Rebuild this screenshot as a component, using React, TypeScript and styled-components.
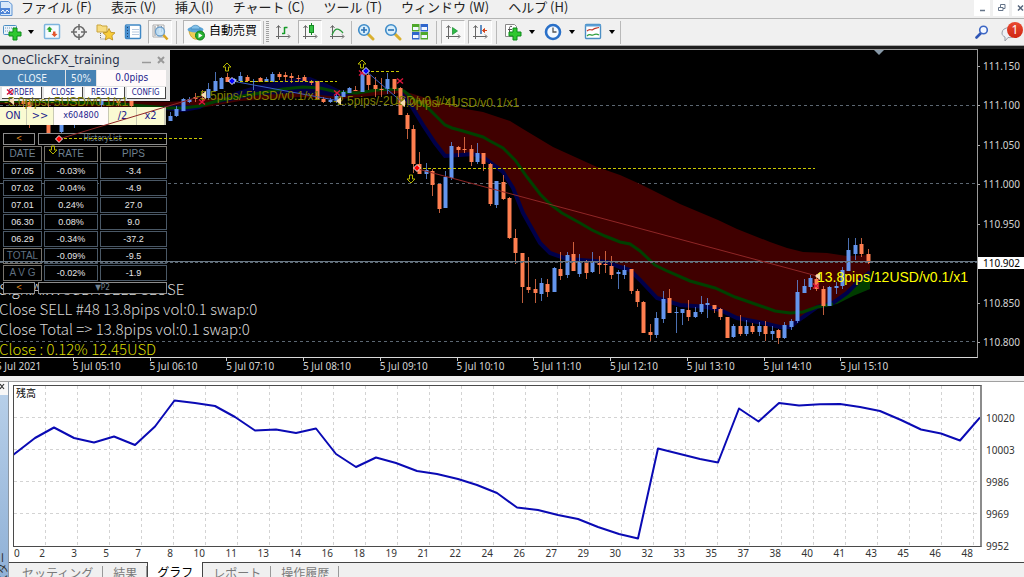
import React from "react";
import styled, { createGlobalStyle, css } from "styled-components";

const GlobalStyle = createGlobalStyle`
  * { box-sizing: border-box; }
  body { margin: 0; background: #f0f0f0; }
  button { font: inherit; color: inherit; margin: 0; padding: 0; border: 0; background: none; }
`;

const uiFont = `"Noto Sans CJK JP", "Noto Sans", sans-serif`;
const axisFont = `"Noto Sans", "Open Sans", sans-serif`;
const panelFont = `"DejaVu Sans Condensed", "DejaVu Sans", sans-serif`;
const gothicFont = `"Noto Sans CJK JP", "Liberation Sans", sans-serif`;

/* ---------- shell ---------- */

const Terminal = styled.div`
  display: flex;
  flex-direction: column;
  min-height: 100vh;
  overflow: hidden;
  background: #f0f0f0;
  color: #222;
  font-family: ${uiFont};
`;

const MenuBar = styled.nav`
  display: flex;
  align-items: flex-start;
  gap: 19px;
  height: 19px;
  border-bottom: 1px solid #b4b4b4;
`;

const DocIcon = styled.svg`
  flex: none;
  width: 13px;
  height: 17px;
  margin-right: -11px;
`;

const MenuItem = styled.button`
  font-size: 13px;
  line-height: 14px;
  white-space: nowrap;
`;

const WindowButtons = styled.div`
  display: flex;
  gap: 3px;
  margin-left: auto;
  margin-right: -4px;
`;

const WindowButton = styled.button`
  width: 16px;
  height: 16px;
  background: #fff;
  svg { display: block; }
`;

/* ---------- toolbar ---------- */

const Toolbar = styled.div`
  display: flex;
  align-items: center;
  height: 27px;
  border-bottom: 1px solid #a9a9a9;
`;

const ToolGroup = styled.div`
  display: flex;
  gap: 3px;
`;

const ToolButton = styled.button<{ $pressed?: boolean }>`
  display: flex;
  align-items: center;
  justify-content: center;
  width: 24px;
  height: 24px;
  ${(p) =>
    p.$pressed &&
    css`
      background: #f7f7f7;
      border: 1px solid #fff;
      border-top-color: #b4b4b4;
      border-left-color: #b4b4b4;
    `}
`;

const DropButton = styled.button`
  width: 13px;
  height: 24px;
  margin-left: -3px;
  display: flex;
  align-items: center;
  justify-content: center;
  &::after {
    content: "";
    border: 3px solid transparent;
    border-top: 4px solid #000;
    border-bottom: 0;
  }
`;

const AutoTrade = styled.button`
  display: flex;
  align-items: center;
  gap: 4px;
  height: 24px;
  margin-left: 2px;
  padding: 0 3px;
  font-size: 12px;
  line-height: 20px;
  color: #000;
  background: #f7f7f7;
  border: 1px solid #fff;
  border-top-color: #b4b4b4;
  border-left-color: #b4b4b4;
  white-space: nowrap;
  span { padding-bottom: 4px; }
`;

const Divider = styled.i<{ $tight?: boolean }>`
  width: 1px;
  height: 23px;
  margin: 0 ${(p) => (p.$tight ? 2 : 4)}px;
  background: #b9b9b9;
  & + & { margin: 0; }
`;

const Grip = styled.i`
  width: 3px;
  height: 22px;
  margin-right: 2px;
  background: repeating-linear-gradient(#a0a0a0 0 1px, #f0f0f0 1px 2px);
`;

const ToolbarEnd = styled.div`
  display: flex;
  align-items: center;
  gap: 12px;
  margin-left: auto;
  padding-right: 1px;
`;

const AlertButton = styled.button`
  position: relative;
  width: 22px;
  height: 24px;
`;

const Badge = styled.span`
  position: absolute;
  top: 2px;
  right: 0;
  width: 16px;
  height: 16px;
  border-radius: 8px;
  background: linear-gradient(#ea4a32, #cf2410);
  color: #fff;
  font: 12px/16px ${axisFont};
  text-align: center;
`;

/* ---------- price chart ---------- */

const ChartWindow = styled.section`
  display: grid;
  grid-template-columns: 1fr 46px;
  background: #000;
  border-top: 3px solid #1e1e1e;
`;

const Plot = styled.div`
  position: relative;
  height: 309px;
  border: solid #9a9a9a;
  border-width: 1px 1px 1px 0;
  border-bottom-color: #d8d8d8;
  overflow: hidden;
`;

const Drawing = styled.svg`
  display: block;
  width: 100%;
  height: 100%;
`;

const Overlay = styled(Drawing)`
  position: absolute;
  inset: 0;
  pointer-events: none;
`;

const PriceAxis = styled.div`
  display: flex;
  flex-direction: column;
  justify-content: space-between;
  height: 309px;
  padding: 11px 0 10px;
  color: #d4d4d4;
  font: 10px/12px ${axisFont};
`;

const Price = styled.span<{ $now?: boolean }>`
  padding-left: 5px;
  ${(p) =>
    p.$now
      ? css`
          background: #fff;
          color: #000;
        `
      : css`
          background: linear-gradient(#aaa, #aaa) 0 6px / 2px 1px no-repeat;
        `}
`;

const TimeAxis = styled.div`
  grid-column: 1 / -1;
  display: grid;
  grid-template-columns: repeat(12, 1fr);
  height: 18px;
  margin-left: -4px;
  padding-right: 107px;
  color: #d4d4d4;
  font: 10px/16px ${axisFont};
  white-space: nowrap;
  span { background: linear-gradient(#ccc, #ccc) 0 0 / 1px 3px no-repeat; }
`;

/* ---------- one click panel ---------- */

const Side = styled.div`
  position: absolute;
  top: 0;
  left: 0;
  width: 170px;
`;

const OneClick = styled.div`
  height: 51px;
  background: #e3e3e3;
  padding-right: 4px;
`;

const PanelTitle = styled.div`
  display: flex;
  justify-content: space-between;
  align-items: center;
  height: 20px;
  padding-left: 2px;
  color: #27314a;
  font: 13px/20px ${panelFont};
`;

const PanelControls = styled.div`
  display: flex;
  gap: 6px;
`;

const PanelRow = styled.div`
  display: flex;
  height: 16px;
  gap: 1px;
`;

const Blue = styled.button<{ $grow: number }>`
  flex: ${(p) => p.$grow} 0 0;
  background: #4682b4;
  color: #e9f1f8;
  font: 10px/15px ${panelFont};
`;

const Field = styled.output<{ $grow: number }>`
  flex: ${(p) => p.$grow} 0 0;
  background: #fffafa;
  color: #1c1c8c;
  text-align: center;
  font: 10px/15px ${panelFont};
`;

const SmallRow = styled.div`
  display: grid;
  grid-template-columns: repeat(4, 1fr);
  gap: 2px;
  padding: 1px 0 0 2px;
`;

const Small = styled.button`
  height: 12px;
  background: #fff;
  border: solid #444;
  border-width: 0 1px 1px 0;
  color: #1c1c8c;
  font: 8px/10px ${panelFont};
`;

const LotRow = styled.div`
  display: grid;
  grid-template-columns: 26px 26px 54px 27px 27px;
  gap: 1px;
  width: 166px;
  height: 18px;
  margin: 6px 0 8px;
  background: #c9c9b4;
`;

const Lot = styled.button`
  background: #fafad2;
  color: #1c1c8c;
  font: 11px/18px ${panelFont};
`;

const LotField = styled.output`
  background: #fffafa;
  color: #1c1c8c;
  text-align: center;
  font: 9px/17px ${panelFont};
`;

const ListBar = styled.div`
  display: flex;
  gap: 3px;
  height: 12px;
  padding: 0 3px;
`;

const ListButton = styled.button<{ $wide?: boolean }>`
  flex: ${(p) => (p.$wide ? "1" : "0 0 32px")};
  border: 1px solid #8c8c8c;
  background: #000;
  color: ${(p) => (p.$wide ? "#708090" : "#e08a1e")};
  font: 8px/10px ${panelFont};
`;

const History = styled.table`
  border-spacing: 2px 1px;
  margin-left: 1px;
  width: 168px;
  table-layout: fixed;
  color: #e6e6e6;
  font: 9px/14px "Liberation Sans Narrow", "Liberation Sans", sans-serif;
  text-align: center;
  th, td {
    height: 16px;
    padding: 0;
    border: 1px solid #4a5866;
    background: #000;
    font-weight: 400;
  }
  th {
    color: #708090;
    font: 10px/12px "Liberation Sans", sans-serif;
    border-color: #77746e;
  }
  tbody th { color: #e6e6e6; font: inherit; border-color: #4a5866; }
  tfoot th { color: #5f6f80; }
`;

const Log = styled.div`
  position: absolute;
  left: -1px;
  top: 229px;
  color: #d8d8d8;
  font: 300 15px/20px ${gothicFont};
  white-space: nowrap;
  p { margin: 0; }
  p:last-child { color: #d8d800; }
`;

/* ---------- tester ---------- */

const Splitter = styled.div`
  height: 5px;
  background: #f0f0f0;
`;

const Tester = styled.section`
  display: grid;
  grid-template-columns: 9px 1fr;
  flex: 1;
  border-top: 1px solid #a0a0a0;
`;

const TesterEdge = styled.div`
  position: relative;
  overflow: hidden;
  background: linear-gradient(#b9d1ea, #8fb0d6);
  border-right: 1px solid #8b96a2;
`;

const CloseTester = styled.button`
  display: block;
  width: 8px;
  height: 13px;
  background: #f7f7f7;
  svg { display: block; }
`;

const TesterName = styled.span`
  position: absolute;
  top: 166px;
  left: -5px;
  writing-mode: vertical-rl;
  text-orientation: sideways;
  transform: rotate(180deg);
  color: #333;
  font-size: 11px;
  line-height: 15px;
  height: 48px;
`;

const TesterBody = styled.div`
  display: flex;
  flex-direction: column;
  min-width: 0;
`;

const Balance = styled.div`
  display: grid;
  grid-template-columns: 1fr 42px;
  grid-template-rows: 162px 15px;
  padding: 3px 0 0 4px;
  background: #fff;
`;

const BalancePlot = styled.div`
  height: 162px;
  border: solid #4a4a4a;
  border-width: 1px 2px 1px 1px;
  border-right-color: #8c8c8c;
`;

const BalanceAxis = styled.div`
  display: flex;
  flex-direction: column;
  justify-content: space-between;
  height: 142px;
  margin-top: 26px;
  padding-left: 4px;
  color: #333;
  font: 10px/14px ${axisFont};
`;

const TradeAxis = styled.div`
  grid-column: 1 / -1;
  display: flex;
  color: #333;
  font: 10px/13px ${axisFont};
  span { width: 32px; text-align: right; }
  span:first-child { width: 0; padding-left: 1px; margin-right: -1px; }
`;

const Tabs = styled.div`
  display: flex;
  flex: 1;
  min-height: 15px;
  height: 15px;
  overflow: hidden;
  background: #f0f0f0;
`;

const Tab = styled.button<{ $active?: boolean }>`
  height: 20px;
  padding: 0 10px;
  border-top: 1px solid #444;
  color: #7a7a7a;
  font-size: 12px;
  line-height: 18px;
  white-space: nowrap;
  ${(p) =>
    p.$active
      ? css`
          padding: 0 9px;
          background: #fff;
          color: #000;
          border: 1px solid #444;
          border-width: 0 1px;
        `
      : css`
          background: linear-gradient(#999, #999) 100% 3px / 1px 14px no-repeat;
        `}
`;

const TabLead = styled.i<{ $fill?: boolean }>`
  flex: ${(p) => (p.$fill ? "1" : "0 0 3px")};
  border-top: 1px solid #444;
`;

/* ---------- data ---------- */

const menus = ["ファイル (F)", "表示 (V)", "挿入(I)", "チャート (C)", "ツール (T)", "ウィンドウ (W)", "ヘルプ (H)"];

const prices = ["111.150", "111.100", "111.050", "111.000", "110.950", "110.902", "110.850", "110.800"];

const times = [
  "5 Jul 2021", "5 Jul 05:10", "5 Jul 06:10", "5 Jul 07:10", "5 Jul 08:10", "5 Jul 09:10",
  "5 Jul 10:10", "5 Jul 11:10", "5 Jul 12:10", "5 Jul 13:10", "5 Jul 14:10", "5 Jul 15:10",
];

const historyRows = [
  ["07.05", "-0.03%", "-3.4"],
  ["07.02", "-0.04%", "-4.9"],
  ["07.01", "0.24%", "27.0"],
  ["06.30", "0.08%", "9.0"],
  ["06.29", "-0.34%", "-37.2"],
];

const historyTotals = [
  ["TOTAL", "-0.09%", "-9.5"],
  ["A V G", "-0.02%", "-1.9"],
];

const tradeNumbers = [
  0, 2, 3, 5, 7, 8, 10, 11, 13, 14, 16, 18, 19, 21, 22, 24, 26, 27, 29, 30, 32, 33, 35, 37, 38, 40, 41, 43, 45, 46, 48,
];

const balanceLine =
  "13,455 35,438 54,427.5 74,438 94,442.5 114,436.5 135,445 155,426.5 174.5,400.5 195,403 215,406 235,417 255,430.5 276,429.5 296,433 316,428.5 336,454 356,467 376,457.5 396,463 417,471 437,474 458,479 477,485 497,493 517,507.5 538,510 558,515 578,519 598,527 619,534 638,538.5 658,448.5 680,454 700,459 718,462.5 739,408.5 758.5,421.5 779,403 799,405.5 820,404.3 840,404 860,407 880,411 901,420 921,429.5 941,433.5 960,440.5 980,417.5";

type Candle = [x: number, up: 0 | 1, high: number, top: number, bottom: number, low: number];

const candles: Candle[] = [
  [23, 0, 96, 98, 104, 112], [29, 0, 100, 102, 108, 128], [48, 0, 100, 110, 133, 133], [61, 1, 110, 116, 132, 133],
  [74, 1, 120, 122, 124, 128], [101, 1, 98, 99, 105, 107], [131, 0, 98, 101, 106, 108], [118, 0, 98, 100, 103, 106],
  [170, 1, 112, 116, 121, 121], [176, 1, 106, 109, 116, 117], [183, 1, 98, 99, 111, 111], [189, 1, 97, 99, 102, 103],
  [195, 0, 93, 97, 99, 102], [202, 0, 90, 98, 99, 103], [208, 1, 83, 89, 98, 100], [215, 1, 72, 81, 91, 91],
  [221, 1, 77, 78, 89, 89], [227, 0, 73, 77, 82, 82], [234, 1, 78, 79, 81, 84], [240, 1, 72, 76, 81, 81],
  [247, 0, 75, 77, 81, 81], [253, 1, 79, 81, 82, 90], [260, 0, 77, 78, 82, 82], [266, 1, 77, 79, 82, 82],
  [272, 1, 72, 74, 82, 82], [279, 0, 72, 74, 77, 80], [285, 0, 72, 75, 77, 81], [291, 0, 73, 76, 78, 83],
  [298, 0, 75, 78, 79, 82], [304, 0, 75, 77, 81, 81], [311, 0, 80, 81, 83, 85], [317, 0, 81, 81, 99, 99],
  [323, 0, 97, 99, 102, 103], [330, 1, 98, 100, 102, 103], [336, 1, 94, 96, 101, 103], [343, 1, 90, 92, 97, 97],
  [349, 1, 87, 88, 93, 93], [355, 0, 86, 90, 91, 91], [362, 1, 70, 72, 92, 92], [368, 0, 73, 75, 85, 90],
  [375, 0, 77, 85, 89, 97], [381, 0, 78, 89, 90, 97], [387, 1, 73, 79, 89, 94], [394, 0, 79, 79, 89, 94],
  [400, 0, 87, 88, 115, 115], [407, 0, 113, 115, 129, 139], [413, 0, 125, 129, 164, 173], [419, 0, 152, 164, 174, 174],
  [426, 1, 163, 170, 174, 179], [432, 0, 169, 171, 185, 196], [439, 0, 184, 184, 209, 213], [445, 1, 171, 177, 208, 208],
  [451, 1, 142, 146, 178, 180], [458, 0, 146, 147, 150, 157], [464, 0, 137, 149, 150, 153], [471, 0, 145, 149, 162, 166],
  [477, 1, 143, 153, 162, 164], [483, 0, 153, 153, 164, 171], [490, 0, 163, 164, 204, 206], [496, 1, 181, 181, 205, 208],
  [503, 0, 175, 182, 199, 200], [509, 0, 197, 198, 238, 239], [515, 0, 229, 238, 253, 264], [522, 0, 253, 253, 287, 303],
  [528, 0, 257, 287, 290, 293], [535, 0, 279, 289, 293, 303], [541, 1, 278, 283, 294, 301], [547, 0, 279, 284, 292, 297],
  [554, 1, 267, 268, 292, 292], [560, 0, 252, 269, 276, 280], [567, 1, 252, 255, 275, 278], [573, 0, 242, 254, 271, 271],
  [579, 1, 254, 262, 274, 277], [586, 0, 260, 262, 273, 279], [592, 1, 252, 262, 272, 273], [599, 0, 256, 263, 265, 274],
  [605, 0, 251, 264, 265, 273], [611, 0, 256, 266, 275, 279], [618, 1, 270, 272, 274, 289], [624, 1, 265, 270, 275, 279],
  [631, 0, 269, 269, 291, 294], [637, 0, 289, 291, 302, 307], [643, 0, 301, 302, 333, 333], [650, 0, 324, 332, 335, 341],
  [656, 1, 312, 318, 335, 338], [663, 1, 291, 299, 319, 323], [669, 0, 289, 298, 313, 313], [676, 1, 307, 312, 313, 333],
  [682, 1, 309, 309, 313, 325], [688, 0, 300, 310, 317, 321], [695, 1, 307, 312, 317, 318], [701, 1, 296, 304, 312, 314],
  [707, 1, 298, 303, 305, 318], [714, 0, 305, 305, 309, 313], [720, 0, 308, 309, 317, 320], [727, 0, 317, 317, 338, 338],
  [733, 1, 324, 326, 337, 338], [740, 0, 315, 326, 334, 336], [746, 1, 320, 326, 334, 336], [752, 0, 323, 326, 332, 334],
  [759, 1, 322, 326, 332, 336], [765, 0, 321, 326, 334, 341], [772, 1, 326, 331, 334, 340], [778, 0, 329, 330, 338, 344],
  [784, 1, 322, 325, 338, 339], [791, 1, 319, 321, 327, 330], [797, 1, 280, 292, 321, 323], [804, 1, 279, 286, 293, 293],
  [810, 1, 275, 278, 287, 290], [816, 0, 274, 279, 289, 291], [823, 0, 286, 289, 306, 315], [829, 1, 286, 287, 306, 306],
  [836, 1, 282, 286, 288, 294], [842, 1, 267, 270, 286, 289], [848, 1, 238, 250, 271, 271], [855, 1, 238, 245, 254, 260],
  [861, 0, 238, 244, 254, 257], [868, 0, 249, 254, 263, 264],
];

const upperEdge =
  "400,90 423,97 440,102 460,108 483,112 510,121 523,129 553,147 597,167 620,175 640,184 680,204 718,220 737,229 770,242 787,248 803,252 827,253 847,256 870,255";
const slowLine =
  "400,92 412,107 423,125 435,143 445,156 460,155 473,154 483,157 503,172 513,188 523,213 540,243 550,253 567,259 607,262 620,267 630,270 640,280 657,298 680,305 707,307 720,310 737,318 763,323 780,327 790,327 803,317 817,307 833,303 847,293 860,280 870,272";
const greenLine =
  "0,101 60,102 120,104 168,108 183,108 200,106 217,101 237,97 260,93 283,89 303,87 320,88 337,92 357,93 377,90 397,89 404,91 416,101 427,107 437,117 445,125 452,128 463,131 483,137 490,141 503,148 515,160 527,177 540,194 550,204 562,213 580,223 592,230 605,236 620,242 630,244 640,251 655,265 667,271 690,281 715,288 735,297 755,304 775,311 790,313 803,312 817,307 833,304";

const reversed = (points: string) => points.split(" ").reverse().join(" ");

/* ---------- icons ---------- */

const Ico = ({ w = 18, children }: { w?: number; children: React.ReactNode }) => (
  <svg width={w} height="18" viewBox={`0 0 ${w} 18`} fill="none" aria-hidden="true">
    {children}
  </svg>
);

const plus = (x: number, y: number) => (
  <path
    d={`M${x + 4} ${y}h4v4h4v4h-4v4h-4v-4h-4v-4h4z`}
    fill="#2fc82f"
    stroke="#0d8a1a"
  />
);

const axes = <path d="M4.500 3v13M2 13.500h13.500M2.500 5l2-2.500 2 2.500M14 11.500l2 2-2 2" stroke="#666" />;

const NewChartIcon = () => (
  <Ico w={20}>
    <rect x="1.500" y="2.500" width="13" height="9" rx="1" fill="#eaf3fb" stroke="#4c8fc4" />
    <path d="M3 5h9M3 8h6" stroke="#7c9ab5" strokeDasharray="1 1" />
    {plus(7, 5)}
  </Ico>
);
const ProfilesIcon = () => (
  <Ico>
    <rect x="1.500" y="1.500" width="15" height="14" rx="1" fill="#f5fafe" stroke="#7db4de" strokeWidth="1.500" />
    <path d="M6.500 3.500l3 3-1.500.2v2.300H5.500V6.700L3.500 6.500z" fill="#2aa52a" />
    <path d="M11.500 14l-3-3 1.500-.2V8.500h2.500v2.300l2 .2z" fill="#e2552d" />
  </Ico>
);
const CrosshairIcon = () => (
  <Ico>
    <circle cx="9" cy="9" r="5.500" stroke="#6b6b6b" strokeWidth="1.500" />
    <path d="M9 1v6M9 11v6M1 9h6M11 9h6" stroke="#6b6b6b" strokeWidth="1.500" />
  </Ico>
);
const FavoritesIcon = () => (
  <Ico w={20}>
    <path d="M1 2h4l1 1h5v6H1z" fill="#f7dc80" stroke="#c9a43c" />
    <path d="M4.500 10v6h5" stroke="#777" strokeDasharray="1 1" />
    <path d="M13 5.500l1.800 3.800 4.200.5-3.100 2.900.8 4.300-3.700-2-3.700 2 .8-4.300L7 9.800l4.200-.5z" fill="#f8cc3a" stroke="#b98a17" strokeWidth=".8" />
  </Ico>
);
const NavigatorIcon = () => (
  <Ico>
    <rect x="1.500" y="2" width="15" height="13.500" rx="1" fill="#fff" stroke="#3f88c5" strokeWidth="1.500" />
    <path d="M2 3h4v12H2z" fill="#4a90d0" />
    <path d="M3.500 4v10" stroke="#1f3f66" strokeDasharray="1 2" />
    <path d="M8 6.500h7M8 9h7M8 11.500h7" stroke="#b9cbe0" />
  </Ico>
);
const TesterIcon = () => (
  <Ico>
    <path d="M2 2h11v12H2z" fill="#fff" stroke="#aaa" />
    <path d="M4 3v10M7 2v9M10.500 3v6" stroke="#888" />
    <circle cx="9" cy="8.500" r="4.500" fill="#bfe0f7" fillOpacity=".85" stroke="#6f9fc9" strokeWidth="1.300" />
    <path d="M12.500 12l4 4.500" stroke="#d9a520" strokeWidth="2.600" />
  </Ico>
);
const RobotIcon = () => (
  <Ico>
    <path d="M2 8c1 7 6 9 9 8l5-7z" fill="#f0cd55" stroke="#c49a22" strokeWidth=".8" />
    <ellipse cx="8.500" cy="6.500" rx="8" ry="3" fill="#5ba5d8" />
    <path d="M4 6c0-5 9-5 9 0z" fill="#82c1ea" stroke="#3f86b9" strokeWidth=".7" />
    <circle cx="13" cy="12.500" r="4.500" fill="#27b131" stroke="#0f7f1a" />
    <path d="M11.500 10l4 2.500-4 2.500z" fill="#fff" />
  </Ico>
);
const BarsIcon = () => (
  <Ico>
    {axes}
    <path d="M10.500 4v7M10.500 4.500h3M8 10.500h2.500" stroke="#149a28" strokeWidth="1.500" />
  </Ico>
);
const CandlesIcon = () => (
  <Ico>
    {axes}
    <path d="M10.500 0v12" stroke="#148a22" />
    <rect x="8.500" y="2.500" width="4" height="7" fill="#35c245" stroke="#148a22" />
  </Ico>
);
const LineIcon = () => (
  <Ico>
    {axes}
    <path d="M4 12c3-7 6-8 11-2" stroke="#2b9a3c" strokeWidth="1.300" />
  </Ico>
);
const ZoomIcon = ({ plusSign }: { plusSign?: boolean }) => (
  <Ico>
    <path d="M11 11l5 5" stroke="#d9b030" strokeWidth="3" strokeLinecap="round" />
    <circle cx="7" cy="7" r="5.300" fill="#d8eefb" stroke="#3f8cc9" strokeWidth="1.600" />
    <path d={plusSign ? "M4 7h6M7 4v6" : "M4 7h6"} stroke="#2a70b4" strokeWidth="1.600" />
  </Ico>
);
const TileIcon = () => (
  <Ico>
    <path d="M1 1h7.500v7.500H1zM9.500 9h7.500v7.500H9.500z" fill="#4ea82a" />
    <path d="M9.500 1H17v7.500H9.500zM1 9h7.500v7.500H1z" fill="#2f66cc" />
    <path d="M2 4h5.500v3H2zM10.500 4H16v3h-5.500zM2 12h5.500v3H2zM10.500 12H16v3h-5.500z" fill="#f2f7ff" />
  </Ico>
);
const ScrollIcon = () => (
  <Ico>
    {axes}
    <path d="M8.500 4.500l5 3.500-5 3.500z" fill="#2dbb45" stroke="#12862a" strokeWidth=".7" />
  </Ico>
);
const ShiftIcon = () => (
  <Ico>
    {axes}
    <path d="M10 2v9" stroke="#2f6bb0" strokeWidth="1.500" />
    <path d="M16 7.500h-3M13.500 5.500l-2 2 2 2z" stroke="#d4431b" fill="#d4431b" />
  </Ico>
);
const IndicatorIcon = () => (
  <Ico>
    <path d="M1.500 1.500h9l2 2v10h-11z" fill="#fff" stroke="#888" />
    <path d="M8 3.500c-2-.5-2.500 0-2.500 2V12M4 6.500h4" stroke="#555" />
    {plus(5, 5)}
  </Ico>
);
const ClockIcon = () => (
  <Ico>
    <circle cx="9" cy="9" r="7" fill="#f4f9ff" stroke="#2a70c8" strokeWidth="2.600" />
    <path d="M9 4.500V9h3.500" stroke="#555" strokeWidth="1.300" />
  </Ico>
);
const TemplateIcon = () => (
  <Ico>
    <rect x="1.500" y="1.500" width="15" height="14" rx="1" fill="#fff" stroke="#4c8fc4" strokeWidth="1.400" />
    <path d="M1 1.500h16v2H1z" fill="#5b9fd6" />
    <path d="M3 8c3-3 4 0 6-1.500s3-1 6-2" stroke="#c0392b" strokeWidth="1.200" />
    <path d="M3 13c3-3 4 0 6-1s3-2 6 0" stroke="#2e9e3d" strokeWidth="1.200" />
  </Ico>
);
const SearchIcon = () => (
  <svg width="14" height="14" viewBox="0 0 14 14" fill="none" aria-hidden="true">
    <path d="M6 8l-4.500 4.500" stroke="#2f55b5" strokeWidth="2.600" strokeLinecap="round" />
    <circle cx="8.500" cy="5" r="3.800" fill="#f3f7ff" stroke="#3c66c4" strokeWidth="1.600" />
  </svg>
);
const ChatIcon = () => (
  <svg width="22" height="24" viewBox="0 0 22 24" aria-hidden="true">
    <path d="M1 13c0-7 13-7 13 0 0 4-4 5-7 4.500L4 21v-4c-2-1-3-2-3-4z" fill="#eef0f5" stroke="#9a9da6" />
  </svg>
);

/* ---------- chart marks ---------- */

const Cross = ({ x, y }: { x: number; y: number }) => (
  <path d={`M${x - 3} ${y - 2.5}l6 5M${x + 3} ${y - 2.5}l-6 5`} stroke="#dc143c" strokeWidth="1.500" />
);
const Diamond = ({ x, y, color }: { x: number; y: number; color: string }) => (
  <path d={`M${x} ${y - 3.5}l3.500 3.500-3.500 3.500-3.500-3.500z`} fill={color} stroke="#f4f4f4" />
);
const Arrow = ({ x, y, down }: { x: number; y: number; down?: boolean }) => {
  const s = down ? -1 : 1;
  return (
    <path
      d={`M${x} ${y - 4 * s}l4 ${4 * s}h-2.500v${4 * s}h-3v${-4 * s}h-2.500z`}
      fill="none"
      stroke="#b4b400"
    />
  );
};
const ExitMark = ({ x, y }: { x: number; y: number }) => <path d={`M${x + 2} ${y - 4}v8l-5-4z`} fill="#f5deb3" />;

const dashed = { stroke: "#c8c800", strokeDasharray: "3 2" };

function CandleLayer() {
  return (
    <Drawing aria-label="USDJPY">
      <g transform="translate(0 -50)">
        <g stroke="#5c6772" strokeDasharray="3 3">
          <path d="M0 105.500H2000M0 183.500H2000M0 341.500H2000" />
        </g>
        <polygon points="0,100 120,101 170,102 215,98 300,92 400,89 400,93 340,99 300,97 240,101 200,108 160,108 0,104" fill="#400000" />
        <polygon points="212,104 235,92 255,86 290,79 310,77 325,83 340,90 355,94 340,97 300,93 260,95 230,101" fill="#000040" />
        <polygon points="160,106 183,105 205,106 200,109 183,112 165,110" fill="#000050" />
        <polygon points={`${upperEdge} ${reversed(slowLine)}`} fill="#400000" />
        <polygon points="805,312 817,306 833,303 847,293 860,280 870,272 870,289 853,296 837,304 820,307" fill="#003c00" />
        <polyline points={slowLine} fill="none" stroke="#00004a" strokeWidth="4" />
        <polyline points={greenLine} fill="none" stroke="#004000" strokeWidth="3" />
        {candles.map(([x, up, high, top, bottom, low]) => (
          <g key={x} fill={up ? "#6495ed" : "#ff7f50"}>
            <rect x={x} y={high} width="1" height={low - high} opacity=".75" />
            <rect x={x - 1.5} y={top} width="4" height={Math.max(bottom - top, 1)} />
          </g>
        ))}
        <path d="M874 50h10l-5 5z" fill="#8899a8" />
      </g>
    </Drawing>
  );
}

function TradeLayer() {
  return (
    <Overlay aria-hidden="true">
      <g transform="translate(0 -50)" fontFamily='"Liberation Sans", Arial, sans-serif' fontSize="12">
        <path d="M0 261.500H2000" stroke="#6a7885" />
        <path d="M0 262.500H2000" stroke="#5c6772" strokeDasharray="3 2" />
        <path d="M230 81.500H337M366 71.500H400M418 168.500H815M59 138.500H202" {...dashed} />
        <path d="M59 139L205 95M418 169L817 276" stroke="#8f2626" />
        <path d="M232 81L340 101M366 71L403 103" stroke="#3a5cc4" />
        <g fill="#808000">
          <text x="4" y="106" clipPath="url(#strip)">-5.0pips/-5USD/v0.1/x1</text>
          <text x="196" y="100">-5.5pips/-5USD/v0.1/x1</text>
          <text x="333" y="105">-2.5pips/-2USD/v0.1/x1</text>
          <text x="395" y="107">-4.0pips/-4USD/v0.1/x1</text>
        </g>
        <clipPath id="strip">
          <rect x="0" y="96" width="170" height="14" />
        </clipPath>
        <Cross x={10} y={92} />
        <Cross x={202} y={102} />
        <Cross x={337} y={93} />
        <Cross x={362} y={73} />
        <Cross x={400} y={81} />
        <Cross x={816} y={286} />
        <Arrow x={227} y={67} />
        <Arrow x={362} y={64} />
        <Arrow x={411} y={179} down />
        <Arrow x={53} y={150} down />
        <Diamond x={232} y={81} color="#0000ff" />
        <Diamond x={366} y={71} color="#0000ff" />
        <Diamond x={417} y={168} color="#ff0000" />
        <Diamond x={59} y={139} color="#ff0000" />
        <ExitMark x={12} y={101} />
        <ExitMark x={204} y={95} />
        <ExitMark x={339} y={101} />
        <ExitMark x={403} y={103} />
        <ExitMark x={818} y={276} />
        <text x="817" y="282" fontSize="14" fill="#ffff00">13.8pips/12USD/v0.1/x1</text>
      </g>
    </Overlay>
  );
}

function BalanceDrawing() {
  return (
    <Drawing aria-label="残高">
      <g transform="translate(-14 -386)">
        <g stroke="#d3d3d3" strokeDasharray="3 3">
          <path d="M14 417.500H2000M14 449.500H2000M14 481.500H2000M14 513.500H2000" />
          {tradeNumbers.slice(1).map((n, i) => (
            <path key={n} d={`M${45.5 + i * 32} 386V546`} />
          ))}
        </g>
        <polyline points={balanceLine} fill="none" stroke="#0a0ab4" strokeWidth="2" strokeLinejoin="round" />
        <text x="16" y="397" fontSize="10" fontFamily="Noto Sans CJK JP, sans-serif" fill="#000">残高</text>
      </g>
    </Drawing>
  );
}

export default function App() {
  return (
    <Terminal>
      <GlobalStyle />
      <MenuBar>
        <DocIcon viewBox="0 0 13 17" fill="none" aria-hidden="true">
          <path d="M.5 1.500h8l3.500 3v11H.5z" fill="#d8e9fa" stroke="#5e93d2" />
          <path d="M0 8h10v6H0z" fill="#4d84d6" />
          <path d="M1 12l2-2 2 3 2-3 2 2" stroke="#fff" />
        </DocIcon>
        {menus.map((m) => (
          <MenuItem key={m}>{m}</MenuItem>
        ))}
        <WindowButtons>
          <WindowButton aria-label="最小化">
            <svg width="16" height="16"><path d="M6 10.500h5" stroke="#66758a" strokeWidth="1.500" /></svg>
          </WindowButton>
          <WindowButton aria-label="元に戻す">
            <svg width="16" height="16" fill="none" stroke="#66758a"><path d="M7.500 7V4.500h4.500v4h-2M5.500 7.500h4.500v3h-4.500z" /></svg>
          </WindowButton>
          <WindowButton aria-label="閉じる">
            <svg width="16" height="16"><path d="M6 5.500l5 5M11 5.500l-5 5" stroke="#55647a" strokeWidth="1.500" /></svg>
          </WindowButton>
        </WindowButtons>
      </MenuBar>

      <Toolbar>
        <ToolGroup>
          <ToolButton aria-label="新規チャート"><NewChartIcon /></ToolButton>
          <DropButton aria-label="チャート一覧" />
          <ToolButton aria-label="組表示"><ProfilesIcon /></ToolButton>
          <ToolButton aria-label="十字カーソル"><CrosshairIcon /></ToolButton>
          <ToolButton aria-label="お気に入り"><FavoritesIcon /></ToolButton>
          <ToolButton aria-label="ナビゲーター"><NavigatorIcon /></ToolButton>
          <ToolButton $pressed aria-label="テスター"><TesterIcon /></ToolButton>
        </ToolGroup>
        <Divider />
        <AutoTrade><RobotIcon /><span>自動売買</span></AutoTrade>
        <Divider $tight />
        <Grip />
        <ToolGroup>
          <ToolButton aria-label="バーチャート"><BarsIcon /></ToolButton>
          <ToolButton $pressed aria-label="ローソク足"><CandlesIcon /></ToolButton>
          <ToolButton aria-label="ラインチャート"><LineIcon /></ToolButton>
        </ToolGroup>
        <Divider $tight />
        <ToolGroup>
          <ToolButton aria-label="拡大"><ZoomIcon plusSign /></ToolButton>
          <ToolButton aria-label="縮小"><ZoomIcon /></ToolButton>
          <ToolButton aria-label="整列"><TileIcon /></ToolButton>
        </ToolGroup>
        <Divider />
        <ToolGroup>
          <ToolButton $pressed aria-label="自動スクロール"><ScrollIcon /></ToolButton>
          <ToolButton $pressed aria-label="チャートの右端移動"><ShiftIcon /></ToolButton>
        </ToolGroup>
        <Divider />
        <ToolGroup>
          <ToolButton aria-label="インディケータ"><IndicatorIcon /></ToolButton>
          <DropButton aria-label="インディケータ一覧" />
          <ToolButton aria-label="時間足"><ClockIcon /></ToolButton>
          <DropButton aria-label="時間足一覧" />
          <ToolButton aria-label="定型チャート"><TemplateIcon /></ToolButton>
          <DropButton aria-label="定型チャート一覧" />
        </ToolGroup>
        <Divider $tight />
        <ToolbarEnd>
          <button aria-label="検索"><SearchIcon /></button>
          <AlertButton aria-label="通知"><ChatIcon /><Badge>1</Badge></AlertButton>
        </ToolbarEnd>
      </Toolbar>

      <ChartWindow>
        <Plot>
          <CandleLayer />
          <Log>
            <p>Sign.AI:WUSDA SELL CLOSE</p>
            <p>Close SELL #48 13.8pips vol:0.1 swap:0</p>
            <p>Close Total =&gt; 13.8pips vol:0.1 swap:0</p>
            <p>Close : 0.12% 12.45USD</p>
          </Log>
          <Side>
            <OneClick>
              <PanelTitle>
                OneClickFX_training
                <PanelControls>
                  <button aria-label="パネル最小化">
                    <svg width="9" height="8"><path d="M0 6.500h9" stroke="#999" strokeWidth="1.500" /></svg>
                  </button>
                  <button aria-label="パネルを閉じる">
                    <svg width="9" height="8"><path d="M1 1l6 6M7 1L1 7" stroke="#999" strokeWidth="2" /></svg>
                  </button>
                </PanelControls>
              </PanelTitle>
              <PanelRow>
                <Blue $grow={65}>CLOSE</Blue>
                <Blue $grow={31}>50%</Blue>
                <Field $grow={69}>0.0pips</Field>
              </PanelRow>
              <SmallRow>
                <Small>ORDER</Small>
                <Small>CLOSE</Small>
                <Small>RESULT</Small>
                <Small>CONFIG</Small>
              </SmallRow>
            </OneClick>
            <LotRow>
              <Lot>ON</Lot>
              <Lot>&gt;&gt;</Lot>
              <LotField>x604800</LotField>
              <Lot>/2</Lot>
              <Lot>x2</Lot>
            </LotRow>
            <ListBar>
              <ListButton>&lt;</ListButton>
              <ListButton $wide>HistoryList</ListButton>
            </ListBar>
            <History>
              <colgroup>
                <col width="39" />
                <col width="54" />
                <col width="67" />
              </colgroup>
              <thead>
                <tr><th>DATE</th><th>RATE</th><th>PIPS</th></tr>
              </thead>
              <tbody>
                {historyRows.map(([d, r, p]) => (
                  <tr key={d}><th>{d}</th><td>{r}</td><td>{p}</td></tr>
                ))}
              </tbody>
              <tfoot>
                {historyTotals.map(([d, r, p]) => (
                  <tr key={d}><th>{d}</th><td>{r}</td><td>{p}</td></tr>
                ))}
              </tfoot>
            </History>
            <ListBar>
              <ListButton>&lt;</ListButton>
              <ListButton $wide>▼P2</ListButton>
            </ListBar>
          </Side>
          <TradeLayer />
        </Plot>
        <PriceAxis>
          {prices.map((p) => (
            <Price key={p} $now={p === "110.902"}>{p}</Price>
          ))}
        </PriceAxis>
        <TimeAxis>
          {times.map((t) => (
            <span key={t}>{t}</span>
          ))}
        </TimeAxis>
      </ChartWindow>

      <Splitter />

      <Tester>
        <TesterEdge>
          <CloseTester aria-label="テスターを閉じる">
            <svg width="8" height="13"><path d="M0 2l4 5M4 2l-4 5" stroke="#333" strokeWidth="1.200" /></svg>
          </CloseTester>
          <TesterName>テスター</TesterName>
        </TesterEdge>
        <TesterBody>
          <Balance>
            <BalancePlot><BalanceDrawing /></BalancePlot>
            <BalanceAxis>
              <span>10020</span>
              <span>10003</span>
              <span>9986</span>
              <span>9969</span>
              <span>9952</span>
            </BalanceAxis>
            <TradeAxis>
              {tradeNumbers.map((n) => (
                <span key={n}>{n}</span>
              ))}
            </TradeAxis>
          </Balance>
          <Tabs>
            <TabLead />
            <Tab>セッティング</Tab>
            <Tab>結果</Tab>
            <Tab $active>グラフ</Tab>
            <Tab>レポート</Tab>
            <Tab>操作履歴</Tab>
            <TabLead $fill />
          </Tabs>
        </TesterBody>
      </Tester>
    </Terminal>
  );
}
